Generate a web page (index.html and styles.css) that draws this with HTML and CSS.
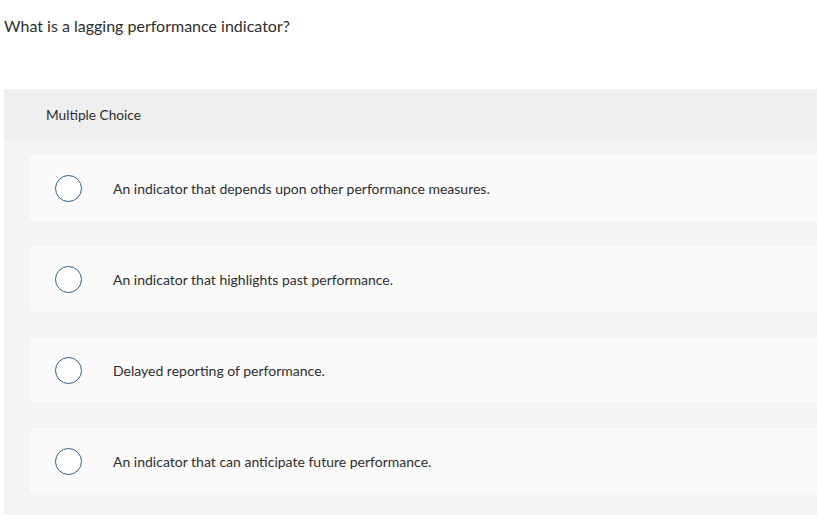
FILE: index.html
```html
<!DOCTYPE html>
<html>
<head>
<meta charset="utf-8">
<link rel="stylesheet" href="styles.css">
</head>
<body>
<div class="page">
  <p class="question">What is a lagging performance indicator?</p>
  <div class="panel">
    <div class="panel-head">Multiple Choice</div>
    <div class="panel-body">
      <div class="option"><span class="radio"></span><span class="label">An indicator that depends upon other performance measures.</span></div>
      <div class="option"><span class="radio"></span><span class="label">An indicator that highlights past performance.</span></div>
      <div class="option"><span class="radio"></span><span class="label">Delayed reporting of performance.</span></div>
      <div class="option"><span class="radio"></span><span class="label">An indicator that can anticipate future performance.</span></div>
    </div>
  </div>
</div>
</body>
</html>
```
FILE: styles.css
```css
html, body {
  margin: 0;
  padding: 0;
  background: #ffffff;
  overflow: hidden;
}
.page {
  width: 817px;
  height: 515px;
  overflow: hidden;
  font-family: Lato, "Noto Sans", sans-serif;
  color: #2e2e2e;
}
.question {
  margin: 0;
  padding: 16px 0 0 4px;
  height: 89px;
  box-sizing: border-box;
  font-size: 16px;
  line-height: 20px;
}
.panel {
  margin-left: 4px;
  width: 860px;
  background: #f4f4f4;
}
.panel-head {
  height: 50px;
  background: #efefef;
  padding-left: 42px;
  display: flex;
  align-items: center;
  font-size: 13.7px;
}
.panel-body {
  padding: 16px 0 30px 26px;
  display: flex;
  flex-direction: column;
  gap: 25px;
}
.option {
  height: 66px;
  background: #fafafa;
  border-radius: 4px;
  display: flex;
  align-items: center;
  padding-left: 25px;
}
.radio {
  width: 25px;
  height: 25px;
  border: 1.5px solid #2e5e8c;
  border-radius: 50%;
  background: #ffffff;
  flex: none;
}
.label {
  margin-left: 31px;
  font-size: 14px;
}
```
